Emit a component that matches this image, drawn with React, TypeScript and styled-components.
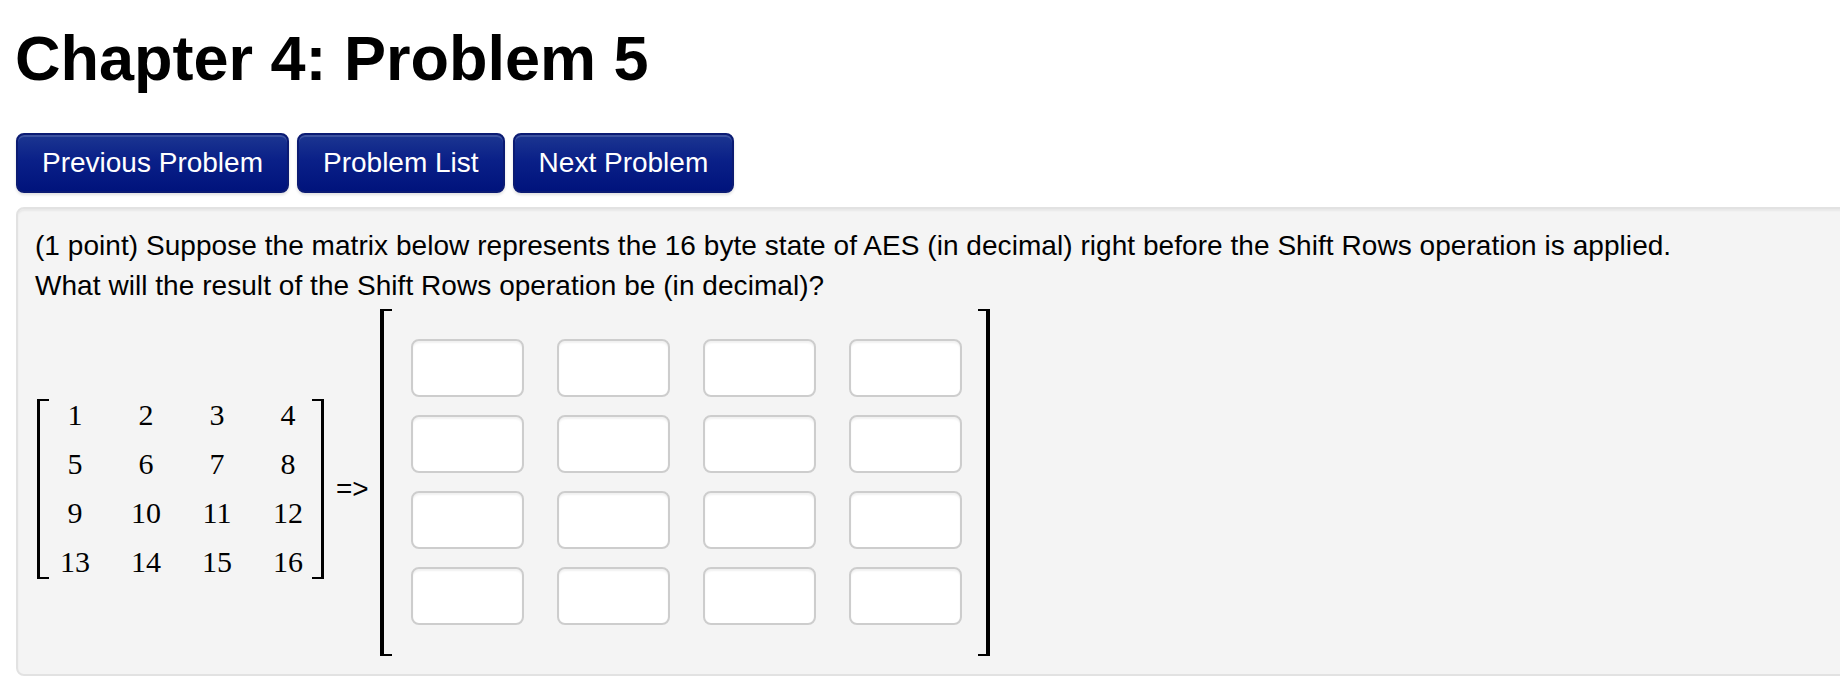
import React from 'react';
import styled, { createGlobalStyle } from 'styled-components';

const GlobalStyle = createGlobalStyle`
  html, body {
    margin: 0;
    padding: 0;
    background: #fff;
    overflow: hidden;
  }
  body {
    font-family: 'Liberation Sans', Arial, Helvetica, sans-serif;
    color: #000;
  }
`;

const left = [
  ['1', '2', '3', '4'],
  ['5', '6', '7', '8'],
  ['9', '10', '11', '12'],
  ['13', '14', '15', '16'],
];

const App = () => (
  <>
    <GlobalStyle />
    <Page>
      <Title>Chapter 4: Problem 5</Title>
      <NavBar>
        <NavButton type="button">Previous Problem</NavButton>
        <NavButton type="button">Problem List</NavButton>
        <NavButton type="button">Next Problem</NavButton>
      </NavBar>
      <Well>
        <Question>
          (1 point) Suppose the matrix below represents the 16 byte state of AES (in decimal) right
          before the Shift Rows operation is applied.
          <br />
          What will the result of the Shift Rows operation be (in decimal)?
        </Question>
        <MatrixRow>
          <GivenGroup>
            <Matrix>
              <SmallBracket side="left" />
              <NumberGrid>
                {left.flat().map((n, i) => (
                  <Cell key={i}>{n}</Cell>
                ))}
              </NumberGrid>
              <SmallBracket side="right" />
            </Matrix>
            <Arrow>=&gt;</Arrow>
          </GivenGroup>
          <AnswerArray>
            <BigBracket side="left" />
            <BoxGrid>
              {Array.from({ length: 16 }).map((_, i) => (
                <AnswerBox key={i} type="text" aria-label={`entry ${i + 1}`} />
              ))}
            </BoxGrid>
            <BigBracket side="right" />
          </AnswerArray>
        </MatrixRow>
      </Well>
    </Page>
  </>
);

export default App;

const Page = styled.div`
  padding: 0 0 0 16px;
`;

const Title = styled.h1`
  margin: 18px 0 35px -1px;
  font-size: 63px;
  line-height: 80px;
  font-weight: bold;
  color: #000;
`;

const NavBar = styled.div`
  display: flex;
  gap: 8px;
`;

const NavButton = styled.button`
  height: 60px;
  padding: 0 24px;
  font-family: 'Liberation Sans', Arial, sans-serif;
  font-size: 28px;
  line-height: 40px;
  color: #fff;
  background: linear-gradient(to bottom, #1c3691 0%, #0a2088 45%, #00137c 100%);
  border: 2px solid #0b1b73;
  border-radius: 8px;
  box-shadow: inset 0 2px 0 rgba(255, 255, 255, 0.15), 0 2px 3px rgba(0, 0, 0, 0.12);
  cursor: pointer;
`;

const Well = styled.div`
  margin-top: 14px;
  width: calc(100% + 60px);
  padding: 17px 17px 18px;
  background: #f4f4f4;
  border: 2px solid #e2e2e2;
  border-radius: 8px;
  box-shadow: inset 0 2px 2px rgba(0, 0, 0, 0.05);
  box-sizing: border-box;
`;

const Question = styled.p`
  margin: 0;
  font-size: 28px;
  line-height: 40px;
  letter-spacing: 0.05px;
  color: #000;
`;

const MatrixRow = styled.div`
  display: flex;
  align-items: center;
  margin-top: 3px;
`;

const GivenGroup = styled.div`
  display: flex;
  align-items: center;
  margin-top: 13px;
`;

const Matrix = styled.div`
  display: flex;
  align-items: stretch;
  margin-left: 2px;
`;

const SmallBracket = styled.span<{ side: 'left' | 'right' }>`
  width: 9px;
  border-top: 2px solid #000;
  border-bottom: 2px solid #000;
  ${(p) => (p.side === 'left' ? 'border-left: 3px solid #000;' : 'border-right: 3px solid #000;')}
`;

const NumberGrid = styled.div`
  display: grid;
  grid-template-columns: repeat(4, 30px);
  column-gap: 41px;
  row-gap: 19px;
  padding: 1px 9px 2px 11px;
`;

const Cell = styled.span`
  font-family: 'Liberation Serif', 'Times New Roman', serif;
  font-size: 30px;
  line-height: 30px;
  text-align: center;
  color: #000;
`;

const Arrow = styled.span`
  margin-left: 12px;
  font-size: 28px;
  line-height: 40px;
`;

const AnswerArray = styled.div`
  display: flex;
  align-items: stretch;
  margin-left: 11px;
`;

const BigBracket = styled.span<{ side: 'left' | 'right' }>`
  width: 8px;
  border-top: 2px solid #000;
  border-bottom: 2px solid #000;
  ${(p) => (p.side === 'left' ? 'border-left: 4px solid #000;' : 'border-right: 4px solid #000;')}
`;

const BoxGrid = styled.div`
  display: grid;
  grid-template-columns: repeat(4, 113px);
  grid-auto-rows: 58px;
  column-gap: 33px;
  row-gap: 18px;
  padding: 30px 16px 31px 19px;
`;

const AnswerBox = styled.input`
  width: 113px;
  height: 58px;
  box-sizing: border-box;
  margin: 0;
  padding: 4px 10px;
  font-size: 28px;
  background: #fff;
  border: 2px solid #cdcdcd;
  border-radius: 8px;
  box-shadow: inset 0 2px 2px rgba(0, 0, 0, 0.06);
  outline: none;
`;
